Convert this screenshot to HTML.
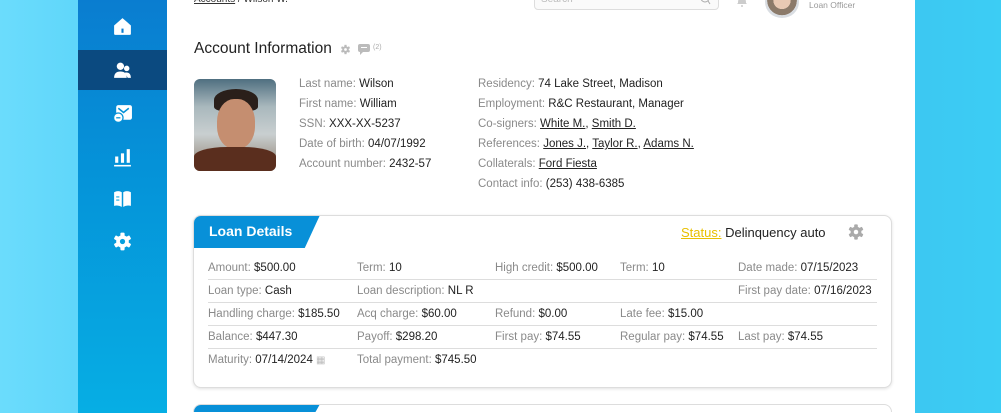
<!DOCTYPE html>
<html style="width:1001px;height:413px;overflow:hidden"><head><meta charset="utf-8"><style>
*{margin:0;padding:0;box-sizing:border-box}
body{width:1001px;height:413px;overflow:hidden;font-family:"Liberation Sans",sans-serif;background:linear-gradient(90deg,#6bdcfc 0%,#5fd6fa 8%,#3cc8f2 92%,#3ccdf4 100%);position:relative;color:#222}
.side{position:absolute;left:78px;top:0;width:89px;height:413px;background:linear-gradient(180deg,#0a7dd0 0%,#0592d8 40%,#06aee4 100%)}
.act{position:absolute;left:0;top:50px;width:89px;height:40px;background:#0b4a80}
.ic{position:absolute;left:34px;width:21px;height:21px}
.main{position:absolute;left:167px;top:0;width:748px;height:413px;background:#fff}
.a{position:absolute;font-size:11.5px;white-space:nowrap}
.g{color:#8a8a8a}
u{text-decoration:underline}
.card{position:absolute;left:193px;top:215px;width:699px;height:173px;border:1px solid #ddd;border-radius:8px;box-shadow:0 1px 3px rgba(0,0,0,.12);background:#fff;overflow:hidden}
.tab{position:absolute;left:-1px;top:-1px;width:127px;height:33px;background:#0890d8;clip-path:polygon(0 0,100% 0,88% 100%,0 100%);border-top-left-radius:8px;color:#fff;font-weight:bold;font-size:14px;padding:8px 0 0 16px}
.ln{position:absolute;left:14px;width:669px;height:1px;background:#ddd}
.r{position:absolute;font-size:11.5px;white-space:nowrap}
</style></head><body>
<div class="side">
<div class="act"></div>
<svg class="ic" style="top:16px" viewBox="0 0 20 20"><path d="M2 9 L10 2 L18 9 V17 Q18 18 17 18 H3 Q2 18 2 17Z" fill="#fff"/><rect x="9" y="12" width="2" height="4" fill="#0a7dd0"/></svg>
<svg class="ic" style="top:60px" viewBox="0 0 20 20"><circle cx="8" cy="6" r="3.5" fill="#fff"/><path d="M2 17 Q2 11 8 11 Q14 11 14 17Z" fill="#fff"/><circle cx="14" cy="8" r="2.6" fill="#fff"/><path d="M12 12 Q18 11 18 17 H15Z" fill="#fff"/></svg>
<svg class="ic" style="top:103px" viewBox="0 0 20 20"><rect x="4" y="2" width="15" height="14" rx="2" fill="#fff"/><path d="M6 5 L11 9 L16 5" stroke="#0592d8" stroke-width="1.5" fill="none"/><circle cx="6" cy="14" r="4.5" fill="#fff" stroke="#0592d8" stroke-width="1.2"/><rect x="4" y="13.5" width="4" height="1.2" fill="#0592d8"/></svg>
<svg class="ic" style="top:146px" viewBox="0 0 20 20"><rect x="3" y="10" width="3" height="6" fill="#fff"/><rect x="8.5" y="7" width="3" height="9" fill="#fff"/><rect x="14" y="3" width="3" height="13" fill="#fff"/><rect x="2" y="18" width="16" height="1.5" fill="#fff"/></svg>
<svg class="ic" style="top:188px" viewBox="0 0 20 20"><path d="M2 4 Q6 2 9.3 4 V18 Q6 16 2 17Z" fill="#fff"/><path d="M10.7 4 Q14 2 18 4 V17 Q14 16 10.7 18Z" fill="#fff"/><rect x="4" y="8" width="3" height="1" fill="#06a0de"/><rect x="4" y="11" width="3" height="1" fill="#06a0de"/></svg>
<svg class="ic" style="top:231px" viewBox="0 0 20 20"><g fill="#fff"><circle cx="10" cy="10" r="6"/><rect x="8" y="1.5" width="4" height="17" rx="1"/><rect x="8" y="1.5" width="4" height="17" rx="1" transform="rotate(60 10 10)"/><rect x="8" y="1.5" width="4" height="17" rx="1" transform="rotate(120 10 10)"/></g><circle cx="10" cy="10" r="2.5" fill="#06a0de"/></svg>
</div>
<div class="main"></div>
<div class="a" style="left:194px;top:-6px;font-size:10px;color:#333"><u>Accounts</u> / Wilson W.</div>
<div style="position:absolute;left:534px;top:-6px;width:185px;height:16px;border:1px solid #ddd;border-radius:4px;background:#fafafa"></div>
<div class="a" style="left:541px;top:-6px;font-size:10px;color:#bbb">Search</div>
<svg style="position:absolute;left:700px;top:-4px" width="11" height="10" viewBox="0 0 11 10"><circle cx="5" cy="2" r="4" stroke="#aaa" fill="none"/><path d="M8 5 L10 8" stroke="#aaa"/></svg>
<svg style="position:absolute;left:736px;top:-3px" width="12" height="10" viewBox="0 0 12 10"><path d="M2 6 Q2 0 6 0 Q10 0 10 6 L11 7 H1Z" fill="#ccc"/><circle cx="6" cy="9" r="1" fill="#ccc"/></svg>
<div style="position:absolute;left:765px;top:-14px;width:34px;height:32px;border-radius:50%;background:radial-gradient(circle at 50% 45%,#e8c9b4 0 35%,#8b7a6a 36% 60%,#d9dde2 61%)"></div>
<div class="a" style="left:809px;top:0px;font-size:8.5px;color:#999">Loan Officer</div>
<div class="a" style="left:194px;top:40px;font-size:15.5px;color:#222">Account Information</div>
<svg style="position:absolute;left:340px;top:44px" width="11" height="11" viewBox="0 0 20 20"><g fill="#bbb"><circle cx="10" cy="10" r="6"/><rect x="8" y="1.5" width="4" height="17"/><rect x="8" y="1.5" width="4" height="17" transform="rotate(60 10 10)"/><rect x="8" y="1.5" width="4" height="17" transform="rotate(120 10 10)"/></g><circle cx="10" cy="10" r="2.5" fill="#fff"/></svg>
<svg style="position:absolute;left:358px;top:44px" width="12" height="11" viewBox="0 0 12 11"><rect x="0" y="0" width="12" height="8" rx="2" fill="#bbb"/><path d="M2 7 L2 11 L6 7Z" fill="#bbb"/><rect x="3" y="3" width="6" height="1" fill="#fff"/></svg>
<div class="a" style="left:373px;top:44px;font-size:7px;color:#aaa">(2)</div>
<div style="position:absolute;left:194px;top:79px;width:82px;height:92px;border-radius:6px;overflow:hidden;background:linear-gradient(180deg,#4f6f80 0%,#a9b8bd 30%,#c9cfd0 60%,#8f8070 100%)">
<div style="position:absolute;left:20px;top:10px;width:44px;height:22px;border-radius:50% 50% 20% 20%;background:#2a1f1a"></div>
<div style="position:absolute;left:23px;top:20px;width:38px;height:50px;border-radius:45%;background:#c58e70"></div>
<div style="position:absolute;left:0;top:68px;width:82px;height:24px;border-radius:40% 40% 0 0;background:#5a2e1e"></div>
</div>
<div class="a" style="left:299px;top:78px"><span class="g">Last name:</span> Wilson</div>
<div class="a" style="left:299px;top:98px"><span class="g">First name:</span> William</div>
<div class="a" style="left:299px;top:118px"><span class="g">SSN:</span> XXX-XX-5237</div>
<div class="a" style="left:299px;top:138px"><span class="g">Date of birth:</span> 04/07/1992</div>
<div class="a" style="left:299px;top:158px"><span class="g">Account number:</span> 2432-57</div>
<div class="a" style="left:478px;top:78px"><span class="g">Residency:</span> 74 Lake Street, Madison</div>
<div class="a" style="left:478px;top:98px"><span class="g">Employment:</span> R&amp;C Restaurant, Manager</div>
<div class="a" style="left:478px;top:118px"><span class="g">Co-signers:</span> <u>White M.</u>, <u>Smith D.</u></div>
<div class="a" style="left:478px;top:138px"><span class="g">References:</span> <u>Jones J.</u>, <u>Taylor R.</u>, <u>Adams N.</u></div>
<div class="a" style="left:478px;top:158px"><span class="g">Collaterals:</span> <u>Ford Fiesta</u></div>
<div class="a" style="left:478px;top:178px"><span class="g">Contact info:</span> (253) 438-6385</div>
<div class="card">
<div class="tab">Loan Details</div>
<div class="r" style="left:487px;top:9px;font-size:13px"><u style="color:#e8c000;text-decoration-color:#e8c000">Status:</u> Delinquency auto</div>
<svg style="position:absolute;left:653px;top:7px" width="18" height="18" viewBox="0 0 20 20"><g fill="#aaa"><circle cx="10" cy="10" r="6"/><rect x="8" y="1.5" width="4" height="17" rx="1"/><rect x="8" y="1.5" width="4" height="17" rx="1" transform="rotate(60 10 10)"/><rect x="8" y="1.5" width="4" height="17" rx="1" transform="rotate(120 10 10)"/></g><circle cx="10" cy="10" r="2.5" fill="#fff"/></svg>
<div class="ln" style="top:63px"></div><div class="ln" style="top:86px"></div><div class="ln" style="top:109px"></div><div class="ln" style="top:132px"></div>
<div class="r" style="left:14px;top:46px"><span class="g">Amount:</span> $500.00</div>
<div class="r" style="left:163px;top:46px"><span class="g">Term:</span> 10</div>
<div class="r" style="left:301px;top:46px"><span class="g">High credit:</span> $500.00</div>
<div class="r" style="left:426px;top:46px"><span class="g">Term:</span> 10</div>
<div class="r" style="left:544px;top:46px"><span class="g">Date made:</span> 07/15/2023</div>
<div class="r" style="left:14px;top:69px"><span class="g">Loan type:</span> Cash</div>
<div class="r" style="left:163px;top:69px"><span class="g">Loan description:</span> NL R</div>
<div class="r" style="left:544px;top:69px"><span class="g">First pay date:</span> 07/16/2023</div>
<div class="r" style="left:14px;top:92px"><span class="g">Handling charge:</span> $185.50</div>
<div class="r" style="left:163px;top:92px"><span class="g">Acq charge:</span> $60.00</div>
<div class="r" style="left:301px;top:92px"><span class="g">Refund:</span> $0.00</div>
<div class="r" style="left:426px;top:92px"><span class="g">Late fee:</span> $15.00</div>
<div class="r" style="left:14px;top:115px"><span class="g">Balance:</span> $447.30</div>
<div class="r" style="left:163px;top:115px"><span class="g">Payoff:</span> $298.20</div>
<div class="r" style="left:301px;top:115px"><span class="g">First pay:</span> $74.55</div>
<div class="r" style="left:426px;top:115px"><span class="g">Regular pay:</span> $74.55</div>
<div class="r" style="left:544px;top:115px"><span class="g">Last pay:</span> $74.55</div>
<div class="r" style="left:14px;top:138px"><span class="g">Maturity:</span> 07/14/2024 <span style="color:#bbb;font-size:10px">&#9638;</span></div>
<div class="r" style="left:163px;top:138px"><span class="g">Total payment:</span> $745.50</div>
</div>
<div style="position:absolute;left:193px;top:404px;width:699px;height:8px;border:1px solid #ddd;border-bottom:none;border-radius:8px 8px 0 0;background:#fff;overflow:hidden"><div style="position:absolute;left:-1px;top:-1px;width:127px;height:9px;background:#0890d8;clip-path:polygon(0 0,100% 0,96% 100%,0 100%)"></div></div>
</body></html>
